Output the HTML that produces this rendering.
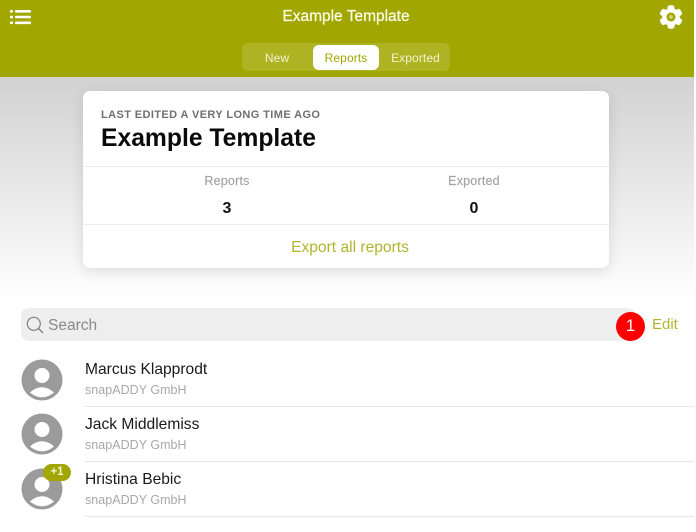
<!DOCTYPE html>
<html><head><meta charset="utf-8">
<style>
html,body{margin:0;padding:0}
body{width:696px;height:532px;position:relative;overflow:hidden;background:#fff;font-family:"Liberation Sans",sans-serif}
.a{position:absolute;white-space:nowrap}
.c{text-align:center}
.hr{position:absolute;height:1px;background:#e6e6e6}
.nm{left:85px;font-size:15.6px;color:#1a1a1a;line-height:18px}
.co{left:85px;font-size:12.5px;color:#a8a8a8;line-height:15px;letter-spacing:.03px}
.seg{font-size:12px;line-height:14px;letter-spacing:.1px}
.lb{font-size:12.5px;line-height:14px;color:#a3a3a3;letter-spacing:.2px;-webkit-text-stroke:.15px #a3a3a3}
</style></head><body>
<div class="a" style="left:0;top:77px;width:694px;height:223px;background:linear-gradient(#d2d2d2,#fff)"></div>
<div class="a" style="left:0;top:0;width:694px;height:77px;background:#a1a700"></div>

<svg class="a" style="left:10px;top:9px" width="22" height="17" viewBox="0 0 22 17">
<g fill="#fff"><rect x="0" y="1" width="3" height="2.600" rx=".6"/><rect x="0" y="6.700" width="3" height="2.600" rx=".6"/><rect x="0" y="12.500" width="3" height="2.600" rx=".6"/>
<rect x="5" y="1" width="16" height="2.600" rx="1"/><rect x="5" y="6.700" width="16" height="2.600" rx="1"/><rect x="5" y="12.500" width="16" height="2.600" rx="1"/></g></svg>

<div class="a c" style="left:246px;top:8px;width:200px;font-size:15.5px;line-height:18px;color:#fbfbe8;-webkit-text-stroke:.25px #fbfbe8">Example Template</div>

<svg class="a" style="left:659px;top:5px" width="24" height="24" viewBox="0 0 24 24">
<g fill="#fff"><circle cx="12" cy="12" r="8.800"/>
<rect x="8.500" y="0.300" width="7" height="23.400" rx="2.200"/>
<rect x="8.500" y="0.300" width="7" height="23.400" rx="2.200" transform="rotate(60 12 12)"/>
<rect x="8.500" y="0.300" width="7" height="23.400" rx="2.200" transform="rotate(120 12 12)"/></g>
<circle cx="12" cy="12" r="4.500" fill="#a1a700"/><circle cx="12" cy="12" r="2" fill="#cfd27a"/></svg>

<div class="a" style="left:242px;top:43px;width:208px;height:28px;border-radius:6px;background:#aeb323"></div>
<div class="a" style="left:313px;top:45px;width:66px;height:25px;border-radius:6px;background:#fff"></div>
<div class="a c seg" style="left:243px;top:51px;width:68px;color:#f2f3d0">New</div>
<div class="a c seg" style="left:313px;top:51px;width:66px;color:#a1a700">Reports</div>
<div class="a c seg" style="left:381px;top:51px;width:69px;color:#f2f3d0">Exported</div>

<div class="a" style="left:83px;top:91px;width:526px;height:177px;background:#fff;border-radius:7px;box-shadow:0 3px 14px rgba(0,0,0,.12)"></div>
<div class="a" style="left:101px;top:109px;font-size:11px;line-height:13px;font-weight:bold;color:#6f6f6f;letter-spacing:.4px">LAST EDITED A VERY LONG TIME AGO</div>
<div class="a" style="left:101px;top:124px;font-size:24.7px;line-height:29px;font-weight:bold;color:#0a0a0a">Example Template</div>
<div class="hr" style="left:83px;top:166px;width:526px;background:#ececec"></div>
<div class="a c lb" style="left:127px;top:174px;width:200px">Reports</div>
<div class="a c lb" style="left:374px;top:174px;width:200px">Exported</div>
<div class="a c" style="left:127px;top:199px;width:200px;font-size:16px;line-height:19px;font-weight:bold;color:#111">3</div>
<div class="a c" style="left:374px;top:199px;width:200px;font-size:16px;line-height:19px;font-weight:bold;color:#111">0</div>
<div class="hr" style="left:83px;top:224px;width:526px;background:#ececec"></div>
<div class="a c" style="left:83px;top:239px;width:534px;font-size:15.6px;line-height:18px;color:#b0b52c">Export all reports</div>

<div class="a" style="left:21px;top:308px;width:614px;height:33px;border-radius:8px;background:#eeeeee"></div>
<svg class="a" style="left:26px;top:316px" width="18" height="18" viewBox="0 0 18 18"><circle cx="7.800" cy="7.800" r="6.500" fill="none" stroke="#808080" stroke-width="1.200"/><path d="M12.500 12.500L16.500 16.500" stroke="#808080" stroke-width="1.400" stroke-linecap="round"/></svg>
<div class="a" style="left:48px;top:317px;font-size:15.500px;line-height:18px;color:#8a8a8a">Search</div>
<div class="a" style="left:616px;top:312px;width:29px;height:29px;border-radius:50%;background:#fe0000"></div>
<div class="a c" style="left:616px;top:316px;width:29px;font-size:17px;line-height:20px;color:#fff">1</div>
<div class="a" style="left:652px;top:316px;font-size:15px;line-height:17px;color:#b0b52c">Edit</div>

<svg class="a" style="left:21px;top:359px" width="42" height="42" viewBox="0 0 42 42"><circle cx="21" cy="21" r="20.500" fill="#9b9b9b"/><circle cx="21" cy="16.500" r="7.500" fill="#fff"/><path d="M9 33.500C13 30 17 28.300 21 28.300C25 28.300 29 30 33 33.500C29 36.800 25 38.300 21 38.300C17 38.300 13 36.800 9 33.500Z" fill="#fff"/></svg>
<svg class="a" style="left:21px;top:413px" width="42" height="42" viewBox="0 0 42 42"><circle cx="21" cy="21" r="20.500" fill="#9b9b9b"/><circle cx="21" cy="16.500" r="7.500" fill="#fff"/><path d="M9 33.500C13 30 17 28.300 21 28.300C25 28.300 29 30 33 33.500C29 36.800 25 38.300 21 38.300C17 38.300 13 36.800 9 33.500Z" fill="#fff"/></svg>
<svg class="a" style="left:21px;top:468px" width="42" height="42" viewBox="0 0 42 42"><circle cx="21" cy="21" r="20.500" fill="#9b9b9b"/><circle cx="21" cy="16.500" r="7.500" fill="#fff"/><path d="M9 33.500C13 30 17 28.300 21 28.300C25 28.300 29 30 33 33.500C29 36.800 25 38.300 21 38.300C17 38.300 13 36.800 9 33.500Z" fill="#fff"/></svg>
<div class="a c" style="left:43px;top:464px;width:28px;height:17px;border-radius:9px;background:#a1a700;font-size:11.500px;line-height:17px;font-weight:bold;color:#f4f5d5">+1</div>

<div class="a nm" style="top:361px">Marcus Klapprodt</div>
<div class="a co" style="top:383px">snapADDY GmbH</div>
<div class="hr" style="left:85px;top:406px;width:609px"></div>
<div class="a nm" style="top:416px">Jack Middlemiss</div>
<div class="a co" style="top:438px">snapADDY GmbH</div>
<div class="hr" style="left:85px;top:461px;width:609px"></div>
<div class="a nm" style="top:471px">Hristina Bebic</div>
<div class="a co" style="top:493px">snapADDY GmbH</div>
<div class="hr" style="left:85px;top:516px;width:609px"></div>
</body></html>
